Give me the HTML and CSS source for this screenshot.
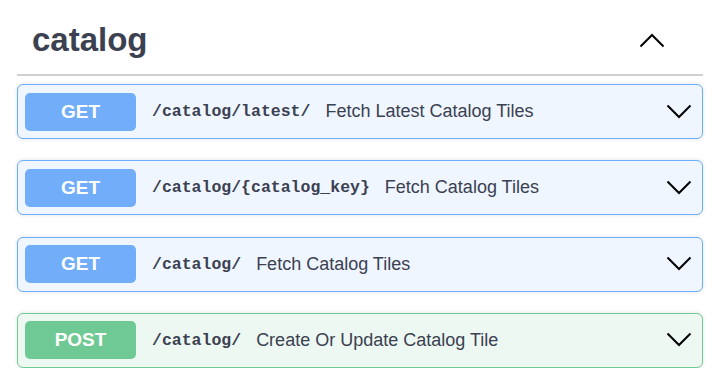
FILE: index.html
```html
<!DOCTYPE html>
<html lang="en">
<head>
  <meta charset="UTF-8">
  <meta name="viewport" content="width=device-width, initial-scale=1.0">
  <title>catalog</title>
  <link rel="stylesheet" href="styles.css">
</head>
<body>
  <section class="tag-section">
    <header class="tag-header">
      <h3>catalog</h3>
      <svg class="arrow" width="26" height="16" viewBox="0 0 26 16"><path d="M1.5 14.5 L13 3 L24.5 14.5" fill="none" stroke="#000" stroke-width="2"/></svg>
    </header>

    <div class="ops">
      <div class="op get">
        <span class="method">GET</span>
        <span class="path">/catalog/latest/</span>
        <span class="summary">Fetch Latest Catalog Tiles</span>
        <svg class="arrow" width="26" height="16" viewBox="0 0 26 16"><path d="M1.5 1.5 L13 13 L24.5 1.5" fill="none" stroke="#000" stroke-width="2"/></svg>
      </div>
      <div class="op get">
        <span class="method">GET</span>
        <span class="path">/catalog/{catalog_key}</span>
        <span class="summary">Fetch Catalog Tiles</span>
        <svg class="arrow" width="26" height="16" viewBox="0 0 26 16"><path d="M1.5 1.5 L13 13 L24.5 1.5" fill="none" stroke="#000" stroke-width="2"/></svg>
      </div>
      <div class="op get">
        <span class="method">GET</span>
        <span class="path">/catalog/</span>
        <span class="summary">Fetch Catalog Tiles</span>
        <svg class="arrow" width="26" height="16" viewBox="0 0 26 16"><path d="M1.5 1.5 L13 13 L24.5 1.5" fill="none" stroke="#000" stroke-width="2"/></svg>
      </div>
      <div class="op post">
        <span class="method">POST</span>
        <span class="path">/catalog/</span>
        <span class="summary">Create Or Update Catalog Tile</span>
        <svg class="arrow" width="26" height="16" viewBox="0 0 26 16"><path d="M1.5 1.5 L13 13 L24.5 1.5" fill="none" stroke="#000" stroke-width="2"/></svg>
      </div>
    </div>
  </section>
</body>
</html>
```

FILE: styles.css
```css
* {
  box-sizing: border-box;
  margin: 0;
  padding: 0;
}

body {
  font-family: 'Liberation Sans', Arial, sans-serif;
  background: #fff;
  color: #3b4151;
}

.tag-section {
  padding: 0 17px;
}

.tag-header {
  display: flex;
  align-items: center;
  justify-content: space-between;
  height: 76px;
  padding: 6px 38px 0 15px;
  border-bottom: 2px solid #d0d0d3;
}

.tag-header h3 {
  font-size: 33px;
  font-weight: bold;
  color: #3b4151;
}

.ops {
  display: flex;
  flex-direction: column;
  gap: 21.3px;
  padding-top: 8px;
}

.op {
  display: flex;
  align-items: center;
  height: 55px;
  padding: 0 10px 0 7px;
  border: 1px solid;
  border-radius: 6px;
  box-shadow: 0 0 4px rgba(0, 0, 0, 0.12);
}

.op.get {
  background: #eff6ff;
  border-color: #6aaefc;
}

.op.post {
  background: #edf8f2;
  border-color: #71cb95;
}

.method {
  width: 111px;
  height: 38px;
  line-height: 38px;
  border-radius: 5px;
  text-align: center;
  color: #fff;
  font-size: 19px;
  font-weight: bold;
}

.get .method {
  background: #72adf9;
}

.post .method {
  background: #6fc994;
}

.path {
  margin-left: 16px;
  font-family: 'Liberation Mono', 'Courier New', monospace;
  font-size: 16.5px;
  font-weight: bold;
  color: #3b4151;
}

.summary {
  flex: 1;
  margin-left: 15px;
  font-size: 18px;
  color: #3b4151;
}
```
